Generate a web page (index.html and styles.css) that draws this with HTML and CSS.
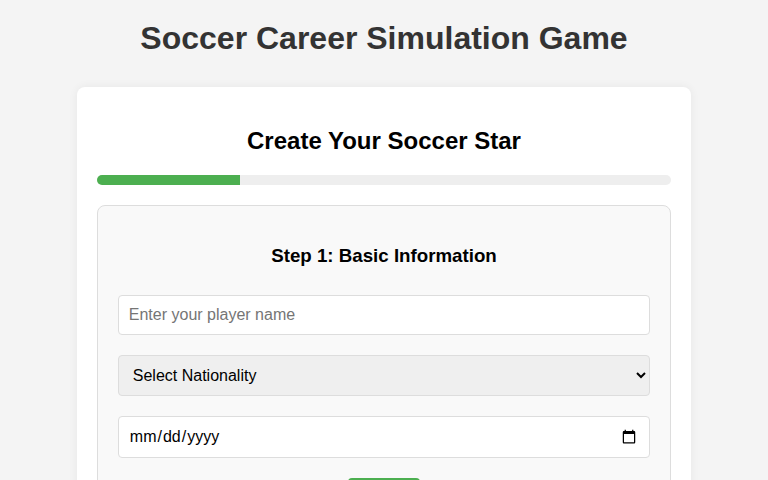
FILE: index.html
```html
<!DOCTYPE html>
<html lang="en">
<head>
<meta charset="utf-8">
<title>Soccer Career Simulation Game</title>
<link rel="stylesheet" href="styles.css">
</head>
<body>
<h1 class="title">Soccer Career Simulation Game</h1>
<div class="card">
  <h2 class="card-title">Create Your Soccer Star</h2>
  <div class="progress"><div class="progress-fill" style="width:25%"></div></div>
  <div class="step">
    <h3 class="step-title">Step 1: Basic Information</h3>
    <input class="field" type="text" placeholder="Enter your player name">
    <select class="field select">
      <option>Select Nationality</option>
    </select>
    <input class="field" type="date">
    <div class="actions"><button class="btn">Next</button></div>
  </div>
</div>
</body>
</html>
```
FILE: styles.css
```css
html, body {
  margin: 0;
  padding: 0;
}
body {
  background: #f4f4f4;
  font-family: "Liberation Sans", Arial, sans-serif;
  color: #000;
  padding: 20px 0;
}
.title {
  margin: 0 0 30px;
  text-align: center;
  color: #333;
  font-size: 32px;
  font-weight: bold;
}
.card {
  width: 80%;
  margin: 0 auto;
  background: #fff;
  border-radius: 8px;
  box-shadow: 0 0 10px rgba(0, 0, 0, 0.06);
  padding: 20px;
  box-sizing: border-box;
}
.card-title {
  text-align: center;
  font-size: 24px;
  margin: 20px 0;
}
.progress {
  height: 10px;
  background: #eee;
  border-radius: 5px;
  overflow: hidden;
  margin-bottom: 20px;
}
.progress-fill {
  height: 100%;
  background: #4caf50;
}
.step {
  display: flex;
  flex-direction: column;
  background: #f9f9f9;
  border: 1px solid #ddd;
  border-radius: 8px;
  padding: 20px;
}
.step-title {
  text-align: center;
  font-size: 18.72px;
  margin: 18.72px 0;
}
.field {
  display: block;
  width: 100%;
  box-sizing: border-box;
  padding: 10px;
  margin: 10px 0;
  border: 1px solid #ddd;
  border-radius: 4px;
  font-family: "Liberation Sans", Arial, sans-serif;
  font-size: 16px;
  background: #fff;
  color: #000;
}
.field::placeholder {
  color: #757575;
}
.select {
  background-color: #efefef;
}
.actions {
  text-align: center;
  margin-top: 10px;
}
.btn {
  background: #4caf50;
  color: #fff;
  border: none;
  border-radius: 4px;
  padding: 10px 20px;
  font-family: "Liberation Sans", Arial, sans-serif;
  font-size: 16px;
  cursor: pointer;
}
```
